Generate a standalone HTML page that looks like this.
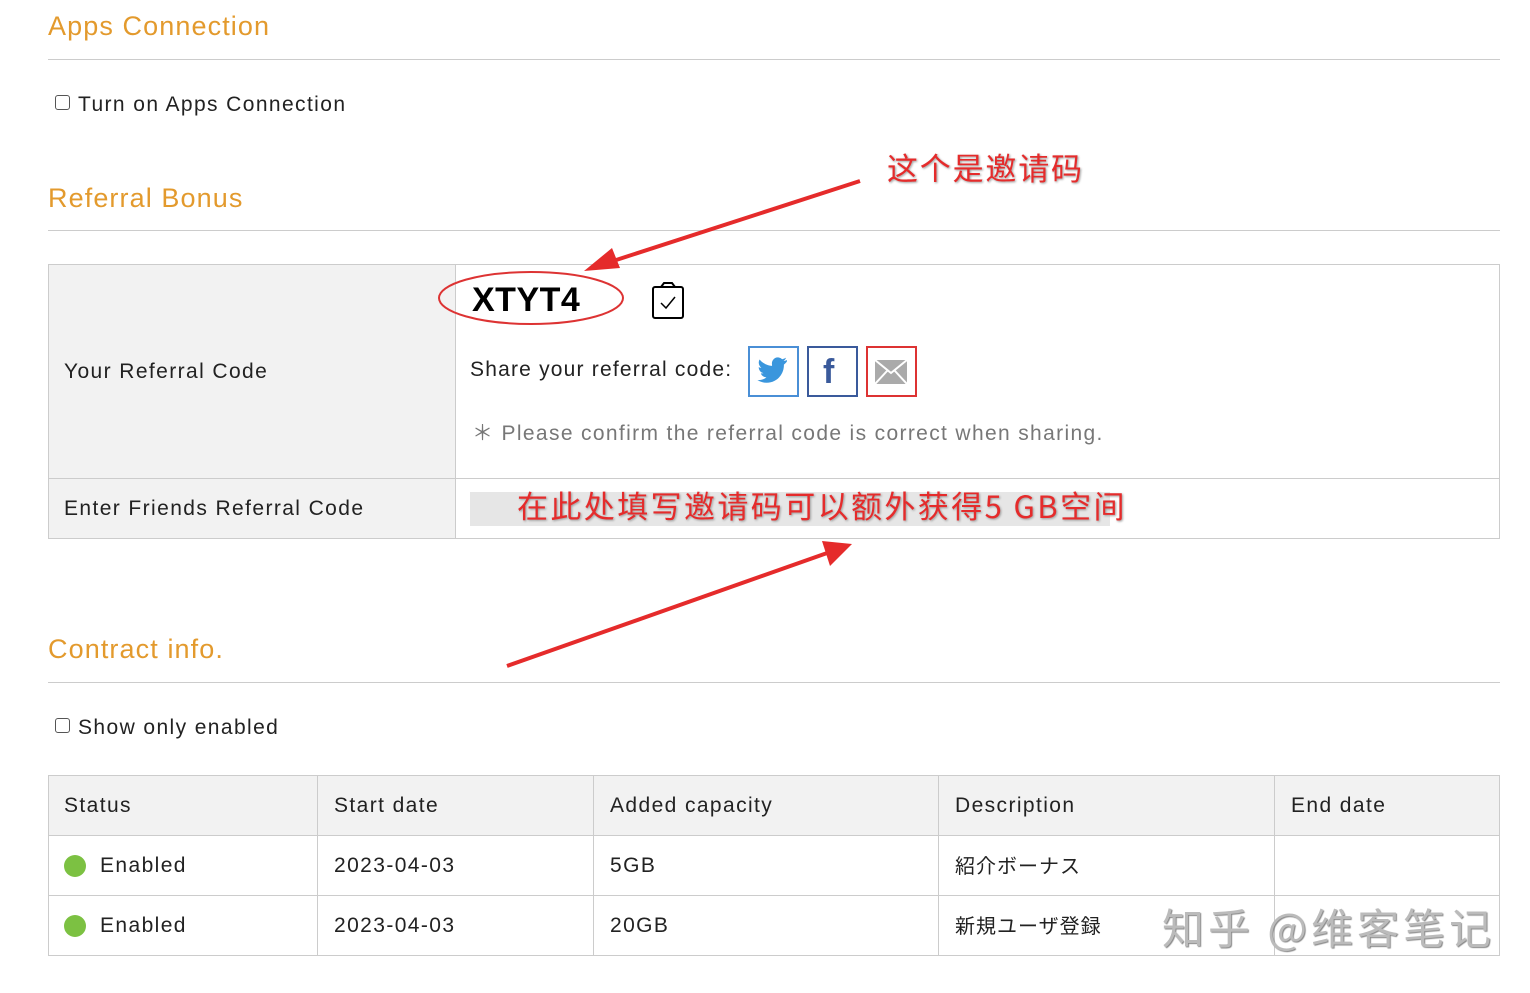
<html><head><style>
body{margin:0;width:1530px;height:993px;background:#fff;font-family:"Liberation Sans","Noto Sans CJK JP",sans-serif;color:#222;position:relative;overflow:hidden}
.a{position:absolute;white-space:nowrap;line-height:1.2}
.h{color:#e39a2d;font-size:27px;letter-spacing:1.1px}
.hr{position:absolute;left:48px;width:1452px;height:1px;background:#ccc}
.cb{position:absolute;width:15px;height:15px;border:1.5px solid #555;border-radius:3px;box-sizing:border-box}
.t{font-size:21px;letter-spacing:1.4px}
.l{position:absolute;background:#ccc}
.g{position:absolute;width:22px;height:22px;border-radius:50%;background:#7cc142}
.r{color:#e52b2b;font-family:"Noto Sans CJK SC",sans-serif;text-shadow:1px 1px 2px #999}
.j{font-size:20px;letter-spacing:1px}
</style></head><body>
<div class="a h" style="left:48px;top:10px">Apps Connection</div>
<div class="hr" style="top:59px"></div>
<div class="cb" style="left:55px;top:95px"></div>
<div class="a t" style="left:78px;top:92px">Turn on Apps Connection</div>
<div class="a h" style="left:48px;top:182px">Referral Bonus</div>
<div class="hr" style="top:230px"></div>

<div class="a" style="left:48px;top:264px;width:407px;height:274px;background:#f2f2f2"></div>
<div class="l" style="left:48px;top:264px;width:1452px;height:1px"></div>
<div class="l" style="left:48px;top:478px;width:1452px;height:1px"></div>
<div class="l" style="left:48px;top:538px;width:1452px;height:1px"></div>
<div class="l" style="left:48px;top:264px;width:1px;height:274px"></div>
<div class="l" style="left:455px;top:264px;width:1px;height:274px"></div>
<div class="l" style="left:1499px;top:264px;width:1px;height:274px"></div>
<div class="a t" style="left:64px;top:359px">Your Referral Code</div>
<div class="a t" style="left:64px;top:496px">Enter Friends Referral Code</div>
<div class="a" style="left:472px;top:280px;font-size:34px;font-weight:bold;color:#000;letter-spacing:0.5px">XTYT4</div>
<svg class="a" style="left:437px;top:270px" width="192" height="56"><ellipse cx="94" cy="28" rx="92" ry="26" fill="none" stroke="#d33" stroke-width="2"/></svg>
<svg class="a" style="left:650px;top:279px" width="36" height="42"><rect x="3" y="8" width="30" height="31" rx="2" fill="none" stroke="#000" stroke-width="2"/><path d="M11 8 L14 4 H22 L25 8 Z" fill="#fff" stroke="#000" stroke-width="2"/><path d="M11 24 L16 29 L25 18" fill="none" stroke="#000" stroke-width="1.5"/></svg>
<div class="a t" style="left:470px;top:357px;letter-spacing:1.2px">Share your referral code:</div>
<div class="a" style="left:748px;top:346px;width:47px;height:47px;border:2px solid #4a8fd6"></div>
<svg class="a" style="left:757px;top:356px" width="32" height="28"><path d="M30 4c-1 .5-2 .8-3.5 1 1.2-.8 2-2 2.5-3.3-1.2.7-2.5 1.2-3.8 1.5A6 6 0 0 0 15 8.5c0 .5 0 1 .1 1.4C10 9.6 5.6 7.2 2.6 3.5c-1.7 3-.7 6.5 1.8 8.3-1 0-2-.3-2.700-.7 0 3 2 5.5 4.8 6-1 .3-2 .3-2.7.1.8 2.4 3 4.1 5.6 4.2-2.5 2-5.9 3-9.1 2.600 2.700 1.800 6 2.700 9.300 2.700 11.2 0 17.3-9.3 17.3-17.3v-.8c1.2-.9 2.200-1.900 3-3.100z" fill="#3a96dd"/></svg>
<div class="a" style="left:807px;top:346px;width:47px;height:47px;border:2px solid #3a5a9b"></div>
<div class="a" style="left:823px;top:352px;font-size:34px;font-weight:bold;color:#3a5a9b">f</div>
<div class="a" style="left:866px;top:346px;width:47px;height:47px;border:2px solid #d33"></div>
<svg class="a" style="left:875px;top:360px" width="32" height="24"><rect width="32" height="24" fill="#aaa"/><path d="M0 0 L16 13 L32 0 M0 24 L12 11 M32 24 L20 11" stroke="#fff" stroke-width="2" fill="none"/></svg>
<div class="a" style="left:472px;top:421px;font-size:21px;color:#777;letter-spacing:1.35px">＊ Please confirm the referral code is correct when sharing.</div>
<div class="a" style="left:470px;top:492px;width:640px;height:34px;background:#e6e6e6"></div>
<div class="a r" style="left:517px;top:486px;font-size:31px;letter-spacing:2.4px">在此处填写邀请码可以额外获得5 GB空间</div>
<div class="a r" style="left:887px;top:148px;font-size:31px;letter-spacing:1.8px">这个是邀请码</div>
<svg class="a" style="left:0;top:0" width="1530" height="993"><path d="M860 181 L610 262" stroke="#e52b2b" stroke-width="4"/><path d="M584 271 L612 248 L620 268 Z" fill="#e52b2b"/><path d="M507 666 L830 552" stroke="#e52b2b" stroke-width="4"/><path d="M852 544 L822 541 L830 566 Z" fill="#e52b2b"/></svg>

<div class="a h" style="left:48px;top:633px">Contract info.</div>
<div class="hr" style="top:682px"></div>
<div class="cb" style="left:55px;top:718px"></div>
<div class="a t" style="left:78px;top:715px">Show only enabled</div>

<div class="a" style="left:48px;top:775px;width:1452px;height:60px;background:#f2f2f2"></div>
<div class="l" style="left:48px;top:775px;width:1452px;height:1px"></div>
<div class="l" style="left:48px;top:835px;width:1452px;height:1px"></div>
<div class="l" style="left:48px;top:895px;width:1452px;height:1px"></div>
<div class="l" style="left:48px;top:955px;width:1452px;height:1px"></div>
<div class="l" style="left:48px;top:775px;width:1px;height:180px"></div>
<div class="l" style="left:317px;top:775px;width:1px;height:180px"></div>
<div class="l" style="left:593px;top:775px;width:1px;height:180px"></div>
<div class="l" style="left:938px;top:775px;width:1px;height:180px"></div>
<div class="l" style="left:1274px;top:775px;width:1px;height:180px"></div>
<div class="l" style="left:1499px;top:775px;width:1px;height:180px"></div>
<div class="a t" style="left:64px;top:793px">Status</div>
<div class="a t" style="left:334px;top:793px">Start date</div>
<div class="a t" style="left:610px;top:793px">Added capacity</div>
<div class="a t" style="left:955px;top:793px">Description</div>
<div class="a t" style="left:1291px;top:793px">End date</div>
<div class="g" style="left:64px;top:855px"></div>
<div class="a t" style="left:100px;top:853px">Enabled</div>
<div class="a t" style="left:334px;top:853px">2023-04-03</div>
<div class="a t" style="left:610px;top:853px">5GB</div>
<div class="a j" style="left:955px;top:855px">紹介ボーナス</div>
<div class="g" style="left:64px;top:915px"></div>
<div class="a t" style="left:100px;top:913px">Enabled</div>
<div class="a t" style="left:334px;top:913px">2023-04-03</div>
<div class="a t" style="left:610px;top:913px">20GB</div>
<div class="a j" style="left:955px;top:915px">新規ユーザ登録</div>
<div class="a" style="left:1162px;top:902px;font-size:42px;color:#bbb;letter-spacing:4px;font-family:'Noto Sans CJK SC',sans-serif;text-shadow:1px 1px 1px #888">知乎 @维客笔记</div>
</body></html>
